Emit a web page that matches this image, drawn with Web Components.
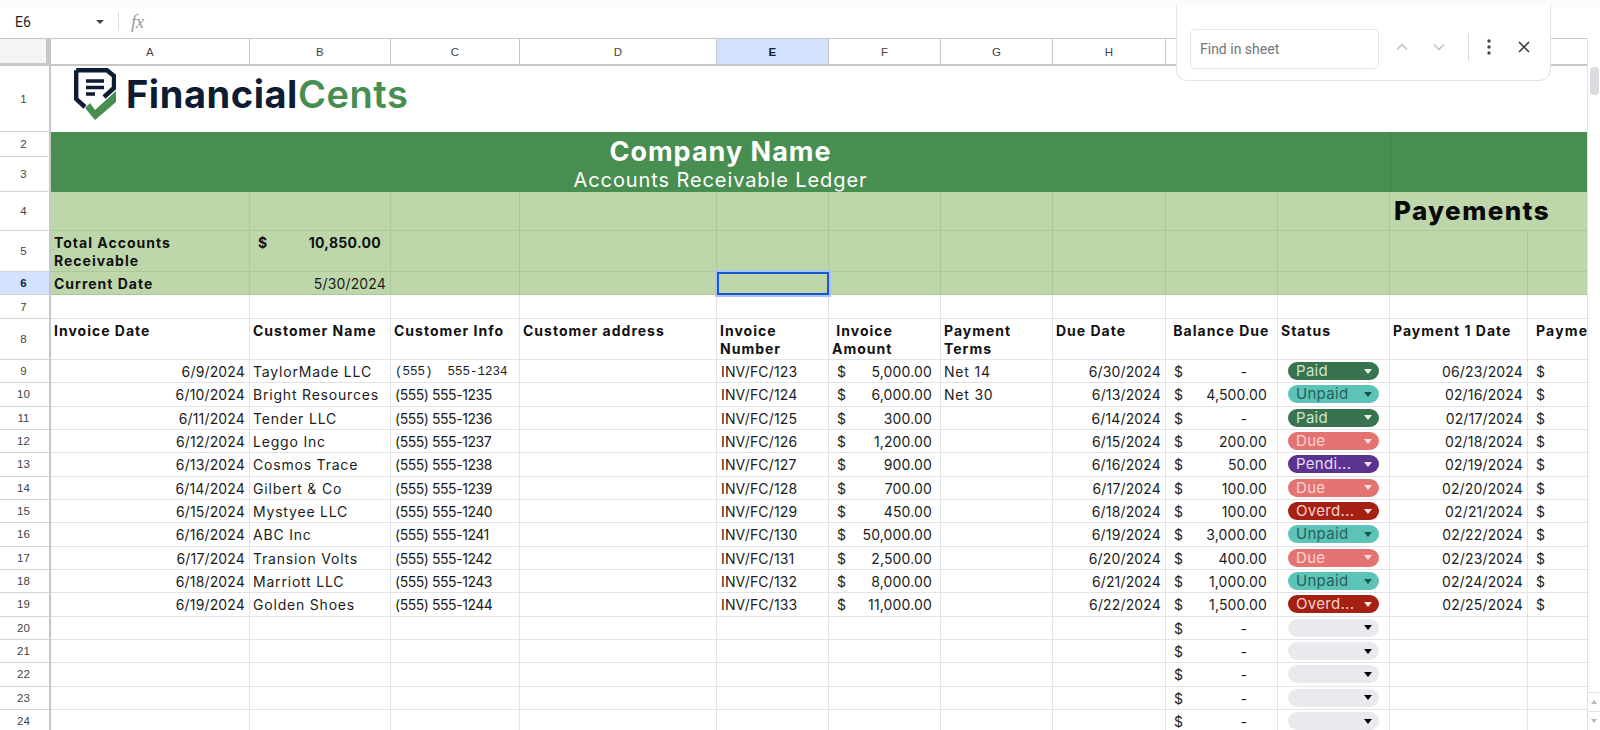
<!DOCTYPE html>
<html>
<head>
<meta charset="utf-8">
<title>Accounts Receivable Ledger</title>
<style>
    html, body { margin: 0; height: 100%; overflow: hidden; background: #fff; }
</style>
</head>
<body>
<sheet-app></sheet-app>
<script>
class FormulaBar extends HTMLElement
{
    constructor()
    {
        super();
        this.attachShadow({mode: 'open'});
    }

    connectedCallback()
    {
        this.shadowRoot.innerHTML = `
        <style>
            :host {
                display: flex;
                align-items: center;
                height: 31px;
                padding-bottom: 2px;
                background: #fff;
                box-sizing: border-box;
                font-family: Roboto, "Liberation Sans", sans-serif;
                color: #1f1f1f;
            }
            .name { width: 80px; padding-left: 15px; font-size: 14px; }
            .arrow { width: 0; height: 0; border: 4px solid transparent; border-top: 4.5px solid #444; border-bottom: 0; margin-left: 1px; }
            .sep { width: 1px; height: 19px; background: #dadce0; margin: 0 12px 0 14px; }
            .fx { font: italic 19px "Liberation Serif", serif; color: #9a9ca0; letter-spacing: -0.5px; }
        </style>
        <span class="name">E6</span>
        <span class="arrow"></span>
        <span class="sep"></span>
        <span class="fx">fx</span>
        `;
    }
}

class FindBar extends HTMLElement
{
    constructor()
    {
        super();
        this.attachShadow({mode: 'open'});
    }

    connectedCallback()
    {
        this.shadowRoot.innerHTML = `
        <style>
            :host {
                position: absolute;
                top: 5px;
                left: 1176px;
                width: 375px;
                height: 76px;
                box-sizing: border-box;
                display: flex;
                align-items: center;
                padding: 12px 0 0 13px;
                background: #fff;
                border: 1px solid #e1e3e6;
                border-top: 0;
                border-radius: 0 0 12px 12px;
                font-family: Roboto, "Liberation Sans", sans-serif;
            }
            .input {
                width: 189px;
                height: 40px;
                box-sizing: border-box;
                border: 1px solid #e3e5e8;
                border-radius: 5px;
                padding-left: 9px;
                display: flex;
                align-items: center;
                font-size: 14px;
                color: #70757a;
            }
            svg { display: block; flex: none; margin-top: -3px; }
            .up { margin-left: 15px; }
            .down { margin-left: 21px; }
            .sep { width: 1px; height: 27px; background: #dadce0; margin: -3px 17px 0 21px; }
            .close { margin-left: 26px; }
        </style>
        <div class="input">Find in sheet</div>
        <svg class="up" width="16" height="16" viewBox="0 0 16 16"><path d="M3 10.5 8 5.5l5 5" fill="none" stroke="#bdc1c6" stroke-width="1.5"/></svg>
        <svg class="down" width="16" height="16" viewBox="0 0 16 16"><path d="M3 5.5 8 10.5l5-5" fill="none" stroke="#bdc1c6" stroke-width="1.5"/></svg>
        <span class="sep"></span>
        <svg width="6" height="16" viewBox="0 0 6 16"><circle cx="3" cy="2" r="1.7" fill="#444746"/><circle cx="3" cy="8" r="1.7" fill="#444746"/><circle cx="3" cy="14" r="1.7" fill="#444746"/></svg>
        <svg class="close" width="12" height="12" viewBox="0 0 12 12"><path d="M1 1l10 10M11 1 1 11" fill="none" stroke="#333" stroke-width="1.5"/></svg>
        `;
    }
}

class FcLogo extends HTMLElement
{
    constructor()
    {
        super();
        this.attachShadow({mode: 'open'});
    }

    connectedCallback()
    {
        this.shadowRoot.innerHTML = `
        <style>
            :host {
                display: flex;
                align-items: flex-start;
                font-family: Inter, "Liberation Sans", sans-serif;
                font-weight: 700;
                font-size: 38px;
                letter-spacing: 0.55px;
                line-height: 52px;
                color: #0d1b33;
            }
            svg { display: block; margin-right: 10px; }
            .word { margin-top: 0; }
            b { font-weight: 600; color: #478e50; }
        </style>
        <svg width="42" height="53" viewBox="0 0 42 53">
            <path d="M2.2 2.2H33L40 8V20L30 29M2.2 2.2V31L11 39" fill="none" stroke="#0d1b33" stroke-width="4.4"/>
            <path d="M12 13H30M12 19.5H30M12 26H21" fill="none" stroke="#0d1b33" stroke-width="3.4"/>
            <polygon points="11,40 16,35 21,42 42,23 42,34 21,52" fill="#478e50"/>
        </svg>
        <span class="word">Financial<b>Cents</b></span>
        `;
    }
}

class StatusChip extends HTMLElement
{
    static STATE_MAP = {
        Paid: {bg: '#38734f', fg: '#cbe6d2', arrow: '#e8f3ea'},
        Unpaid: {bg: '#5cc4b6', fg: '#27605b', arrow: '#1f4f4b'},
        Due: {bg: '#e37472', fg: '#fbd5d2', arrow: '#fbe1df'},
        'Pendi...': {bg: '#5a3391', fg: '#e6dcf5', arrow: '#efe8f9'},
        'Overd...': {bg: '#a61f13', fg: '#f8d2cc', arrow: '#fbe6e2'},
        '': {bg: '#e8eaed', fg: '#000', arrow: '#000'}
    }

    constructor()
    {
        super();
        this.attachShadow({mode: 'open'});
    }

    connectedCallback()
    {
        const label = this.getAttribute('label') || '';
        const state = StatusChip.STATE_MAP[label];
        this.shadowRoot.innerHTML = `
        <style>
            :host {
                display: flex;
                align-items: center;
                justify-content: space-between;
                width: 91px;
                height: 18px;
                box-sizing: border-box;
                padding: 0 7px 0 8px;
                border-radius: 9px;
                background: ${state.bg};
                color: ${state.fg};
                font-size: 15px;
                letter-spacing: 0.3px;
            }
            i { width: 0; height: 0; border: 4.5px solid transparent; border-top: 5px solid ${state.arrow}; border-bottom: 0; }
        </style>
        <span>${label}</span><i></i>
        `;
    }
}

class SheetGrid extends HTMLElement
{
    // letters of I to L sit under the find bar or the scrollbar, so they stay empty
    static COLUMNS = ['A', 'B', 'C', 'D', 'E', 'F', 'G', 'H', '', '', '', ''];
    static WIDTHS = [199, 141, 129, 197, 112, 112, 112, 113, 112, 112, 138, 138];
    static HEIGHTS = [66, 25, 35, 39, 41, 23, 24, 41];
    static RECORDS = [
        ['6/9/2024', 'TaylorMade LLC', '(555)  555-1234', 'INV/FC/123', '5,000.00', 'Net 14', '6/30/2024', '-', 'Paid', '06/23/2024'],
        ['6/10/2024', 'Bright Resources', '(555) 555-1235', 'INV/FC/124', '6,000.00', 'Net 30', '6/13/2024', '4,500.00', 'Unpaid', '02/16/2024'],
        ['6/11/2024', 'Tender LLC', '(555) 555-1236', 'INV/FC/125', '300.00', '', '6/14/2024', '-', 'Paid', '02/17/2024'],
        ['6/12/2024', 'Leggo Inc', '(555) 555-1237', 'INV/FC/126', '1,200.00', '', '6/15/2024', '200.00', 'Due', '02/18/2024'],
        ['6/13/2024', 'Cosmos Trace', '(555) 555-1238', 'INV/FC/127', '900.00', '', '6/16/2024', '50.00', 'Pendi...', '02/19/2024'],
        ['6/14/2024', 'Gilbert &amp; Co', '(555) 555-1239', 'INV/FC/128', '700.00', '', '6/17/2024', '100.00', 'Due', '02/20/2024'],
        ['6/15/2024', 'Mystyee LLC', '(555) 555-1240', 'INV/FC/129', '450.00', '', '6/18/2024', '100.00', 'Overd...', '02/21/2024'],
        ['6/16/2024', 'ABC Inc', '(555) 555-1241', 'INV/FC/130', '50,000.00', '', '6/19/2024', '3,000.00', 'Unpaid', '02/22/2024'],
        ['6/17/2024', 'Transion Volts', '(555) 555-1242', 'INV/FC/131', '2,500.00', '', '6/20/2024', '400.00', 'Due', '02/23/2024'],
        ['6/18/2024', 'Marriott LLC', '(555) 555-1243', 'INV/FC/132', '8,000.00', '', '6/21/2024', '1,000.00', 'Unpaid', '02/24/2024'],
        ['6/19/2024', 'Golden Shoes', '(555) 555-1244', 'INV/FC/133', '11,000.00', '', '6/22/2024', '1,500.00', 'Overd...', '02/25/2024']
    ];

    constructor()
    {
        super();
        this.attachShadow({mode: 'open'});
    }

    connectedCallback()
    {
        this.render();
    }

    money(amount, extra = '')
    {
        const dash = amount === '-' ? 'dash' : '';
        return `<div class="cell money ${extra}"><span>$</span><span class="${dash}">${amount}</span></div>`;
    }

    render()
    {
        const rows = SheetGrid.HEIGHTS.map(h => h + 'px').join(' ');
        const cols = SheetGrid.WIDTHS.map(w => w + 'px').join(' ');

        let html = `<div class="corner"></div>`;
        SheetGrid.COLUMNS.forEach(c => html += `<div class="col-head ${c === 'E' ? 'on' : ''}">${c}</div>`);

        // row 1, logo
        html += `<div class="row-head">1</div><div class="cell logo" style="grid-column: span 12"><fc-logo></fc-logo></div>`;

        // rows 2 and 3, banner
        html += `<div class="row-head">2</div>
            <div class="banner" style="grid-column: span 10; grid-row: span 2"><strong>Company Name</strong><span>Accounts Receivable Ledger</span></div>
            <div class="banner right" style="grid-column: span 2; grid-row: span 2"></div>
            <div class="row-head">3</div>`;

        // row 4
        html += `<div class="row-head">4</div>`;
        for (let i = 0; i < 10; i++)
        {
            html += `<div class="cell green"></div>`;
        }
        html += `<div class="cell green pay" style="grid-column: span 2">Payements</div>`;

        // row 5
        html += `<div class="row-head">5</div>`;
        html += `<div class="cell green bold top">Total Accounts<br>Receivable</div>`;
        html += `<div class="cell green total top money"><span>$</span><span>10,850.00</span></div>`;
        for (let i = 2; i < 12; i++)
        {
            html += `<div class="cell green"></div>`;
        }

        // row 6
        html += `<div class="row-head on">6</div>`;
        html += `<div class="cell green bold mid">Current Date</div><div class="cell green mid end">5/30/2024</div>`;
        for (let i = 2; i < 12; i++)
        {
            html += `<div class="cell green ${i === 4 ? 'picked' : ''}"></div>`;
        }

        // row 7
        html += `<div class="row-head">7</div>`;
        for (let i = 0; i < 12; i++)
        {
            html += `<div class="cell"></div>`;
        }

        // row 8, headers
        html += `<div class="row-head">8</div>`;
        ['Invoice Date', 'Customer Name', 'Customer Info', 'Customer address', 'Invoice\nNumber', ' Invoice\nAmount', 'Payment\nTerms', 'Due Date', ' Balance Due', 'Status']
            .forEach(t => html += `<div class="cell bold top wrap">${t}</div>`);
        html += `<div class="cell bold top">Payment 1 Date</div><div class="cell bold top last-head">Payme</div>`;

        // rows 9 to 19, records
        SheetGrid.RECORDS.forEach((r, i) =>
        {
            html += `<div class="row-head">${i + 9}</div>
                <div class="cell mid end">${r[0]}</div>
                <div class="cell mid txt">${r[1]}</div>
                <div class="cell mid ${i === 0 ? 'mono' : 'phone'}">${r[2]}</div>
                <div class="cell mid"></div>
                <div class="cell mid inv">${r[3]}</div>
                ${this.money(r[4], 'amount')}
                <div class="cell mid txt">${r[5]}</div>
                <div class="cell mid end">${r[6]}</div>
                ${this.money(r[7], 'balance')}
                <div class="cell chip"><status-chip label="${r[8]}"></status-chip></div>
                <div class="cell mid end">${r[9]}</div>
                <div class="cell money dollar"><span>$</span></div>`;
        });

        // rows 20 to 24, blank lines that still have formulas
        for (let n = 20; n <= 24; n++)
        {
            html += `<div class="row-head">${n}</div>`;
            for (let i = 0; i < 8; i++)
            {
                html += `<div class="cell"></div>`;
            }
            html += this.money('-', 'balance');
            html += `<div class="cell chip"><status-chip></status-chip></div><div class="cell"></div><div class="cell"></div>`;
        }

        this.shadowRoot.innerHTML = `
        <style>
            :host {
                display: grid;
                flex: 1;
                min-width: 0;
                grid-template-columns: 51px ${cols};
                grid-template-rows: 28px ${rows};
                grid-auto-rows: 23.33px;
                align-content: start;
                font-family: Inter, "Liberation Sans", sans-serif;
                font-size: 14px;
                line-height: 18px;
                letter-spacing: 0.15px;
                color: #1c1c1c;
                overflow: hidden;
            }
            :host * { box-sizing: border-box; }

            .corner {
                background: #f3f4f5;
                border-top: 1px solid #c7c7c7;
                border-right: 5px solid #c7c7c7;
                border-bottom: 3px solid #c7c7c7;
            }
            .col-head, .row-head {
                display: flex;
                align-items: center;
                justify-content: center;
                font: 11.5px "Liberation Sans", Arial, sans-serif;
                color: #444;
                background: #fff;
            }
            .col-head {
                border-top: 1px solid #c7c7c7;
                border-right: 1px solid #c7c7c7;
                border-bottom: 2px solid #c7c7c7;
            }
            .row-head {
                border-right: 2px solid #c7c7c7;
                border-bottom: 1px solid #d4d4d4;
                padding-right: 2px;
            }
            .on { background: #d3e3fd; color: #0b1f45; font-weight: bold; }

            .cell {
                min-width: 0;
                overflow: hidden;
                white-space: nowrap;
                padding: 0 4px 0 3px;
                border-right: 1px solid #e2e3e5;
                border-bottom: 1px solid #e2e3e5;
            }
            .mid { display: flex; align-items: center; padding-top: 2px; }
            .end { justify-content: flex-end; }
            .top { padding-top: 3px; }
            .bold { font-weight: 700; letter-spacing: 1px; color: #111; }
            .total { font-weight: 700; letter-spacing: 0.3px; color: #111; }
            .wrap { white-space: pre-wrap; }
            .last-head { padding-left: 8px; letter-spacing: 1.2px; }
            .txt { letter-spacing: 0.8px; }
            .inv { padding-left: 4px; }
            .phone { padding-left: 4px; letter-spacing: -0.45px; }
            .mono { padding-left: 4px; font-family: "Liberation Mono", monospace; font-size: 12.5px; letter-spacing: 0; white-space: pre; }

            .green { background: #bdd7ab; border-color: #a9c99b; }
            .logo { border: 0; padding: 2px 0 0 23px; }
            .picked {
                border: 2px solid #1a56cf;
                outline: 2px solid #a9c4f5;
                position: relative;
            }
            .pay { font-size: 26px; font-weight: 800; letter-spacing: 1.4px; color: #0a0a0a; line-height: 37px; padding-left: 4px; }

            .banner {
                background: #478e50;
                color: #fff;
                display: flex;
                flex-direction: column;
                align-items: center;
                padding-top: 3px;
            }
            .banner.right { border-left: 1px solid #3f8048; }
            .banner strong { font-size: 27px; line-height: 34px; font-weight: 700; letter-spacing: 1px; }
            .banner span { font-size: 20px; line-height: 22px; font-weight: 400; letter-spacing: 0.9px; }

            .money {
                display: flex;
                align-items: center;
                justify-content: space-between;
                padding: 2px 9px 0;
            }
            .amount { padding: 2px 8px 0; }
            .balance { padding: 2px 10px 0 8px; }
            .money.total { align-items: flex-start; padding: 3px 9px 0 8px; }
            .money.dollar { justify-content: flex-start; padding-left: 8px; }
            .dash { padding-right: 20px; }
            .chip { display: flex; align-items: center; padding: 0 0 0 10px; }
        </style>
        ${html}
        `;
    }
}

class SheetScrollbar extends HTMLElement
{
    constructor()
    {
        super();
        this.attachShadow({mode: 'open'});
    }

    connectedCallback()
    {
        this.shadowRoot.innerHTML = `
        <style>
            :host {
                display: flex;
                flex-direction: column;
                width: 13px;
                flex: none;
                box-sizing: border-box;
                border-left: 1px solid #e3e3e3;
                padding-top: 29px;
                background: #fff;
            }
            .thumb { width: 9px; height: 28px; margin-left: 2px; border-radius: 4px; background: #dadce0; }
            .btn { height: 18px; display: flex; align-items: center; justify-content: center; border-top: 1px solid #e3e3e3; }
            i { width: 0; height: 0; border: 3.5px solid transparent; }
            .up i { border-top: 0; border-bottom: 4px solid #b5b8bc; }
            .down i { border-bottom: 0; border-top: 4px solid #b5b8bc; }
        </style>
        <div class="thumb"></div>
        <div class="btn up" style="margin-top:auto"><i></i></div>
        <div class="btn down"><i></i></div>
        `;
    }
}

class SheetApp extends HTMLElement
{
    constructor()
    {
        super();
        this.attachShadow({mode: 'open'});
    }

    connectedCallback()
    {
        this.shadowRoot.innerHTML = `
        <style>
            :host {
                display: flex;
                flex-direction: column;
                position: relative;
                width: 1600px;
                height: 730px;
                overflow: hidden;
                background: #fff;
            }
            .strip { height: 7px; background: #f9fbfd; flex: none; }
            .body { display: flex; flex: 1; min-height: 0; }
        </style>
        <div class="strip"></div>
        <formula-bar></formula-bar>
        <div class="body">
            <sheet-grid></sheet-grid>
            <sheet-scrollbar></sheet-scrollbar>
        </div>
        <find-bar></find-bar>
        `;
    }
}

customElements.define('formula-bar', FormulaBar);
customElements.define('find-bar', FindBar);
customElements.define('fc-logo', FcLogo);
customElements.define('status-chip', StatusChip);
customElements.define('sheet-grid', SheetGrid);
customElements.define('sheet-scrollbar', SheetScrollbar);
customElements.define('sheet-app', SheetApp);
</script>
</body>
</html>
